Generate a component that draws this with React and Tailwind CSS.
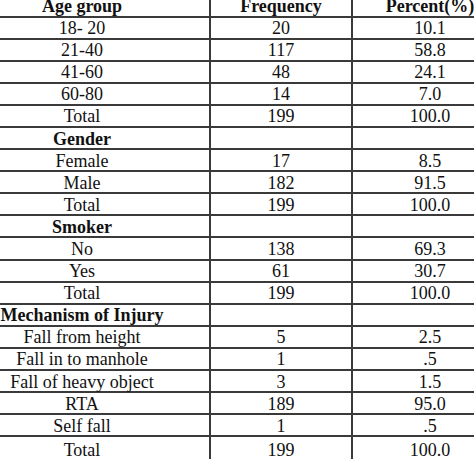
import React from "react";

const rows = [
  { a: "Age group", b: "Frequency", c: "Percent(%)", head: true },
  { a: "18- 20", b: "20", c: "10.1" },
  { a: "21-40", b: "117", c: "58.8" },
  { a: "41-60", b: "48", c: "24.1" },
  { a: "60-80", b: "14", c: "7.0" },
  { a: "Total", b: "199", c: "100.0" },
  { a: "Gender", b: "", c: "", bold: true },
  { a: "Female", b: "17", c: "8.5" },
  { a: "Male", b: "182", c: "91.5" },
  { a: "Total", b: "199", c: "100.0" },
  { a: "Smoker", b: "", c: "", bold: true },
  { a: "No", b: "138", c: "69.3" },
  { a: "Yes", b: "61", c: "30.7" },
  { a: "Total", b: "199", c: "100.0" },
  { a: "Mechanism of Injury", b: "", c: "", bold: true },
  { a: "Fall from height", b: "5", c: "2.5" },
  { a: "Fall in to manhole", b: "1", c: ".5" },
  { a: "Fall of heavy object", b: "3", c: "1.5" },
  { a: "RTA", b: "189", c: "95.0" },
  { a: "Self fall", b: "1", c: ".5" },
  { a: "Total", b: "199", c: "100.0" },
];

export default function App() {
  return (
    <div
      className="w-[474px] h-[459px] overflow-hidden bg-white text-[#111] text-[18px]"
      style={{ fontFamily: '"Liberation Serif", "Times New Roman", serif' }}
    >
      <div className="-ml-[45px] -mt-[4.6px] w-[560px]">
        {rows.map((r, i) => (
          <div
            key={i}
            className={`flex h-[22.1px] ${
              i === rows.length - 1 ? "h-[24px]" : "border-b-2 border-[#3a3a3a]"
            }`}
          >
            <div
              className={`w-[256px] border-r-2 border-[#3a3a3a] flex items-center justify-center leading-none pt-[1px] ${
                r.head || r.bold ? "font-bold" : ""
              }`}
            >
              {r.a}
            </div>
            <div
              className={`w-[142px] border-r-2 border-[#3a3a3a] flex items-center justify-center leading-none pt-[1px] ${
                r.head ? "font-bold" : ""
              }`}
            >
              {r.b}
            </div>
            <div
              className={`w-[154px] flex items-center justify-center leading-none pt-[1px] ${
                r.head ? "font-bold" : ""
              }`}
            >
              {r.c}
            </div>
          </div>
        ))}
      </div>
    </div>
  );
}
